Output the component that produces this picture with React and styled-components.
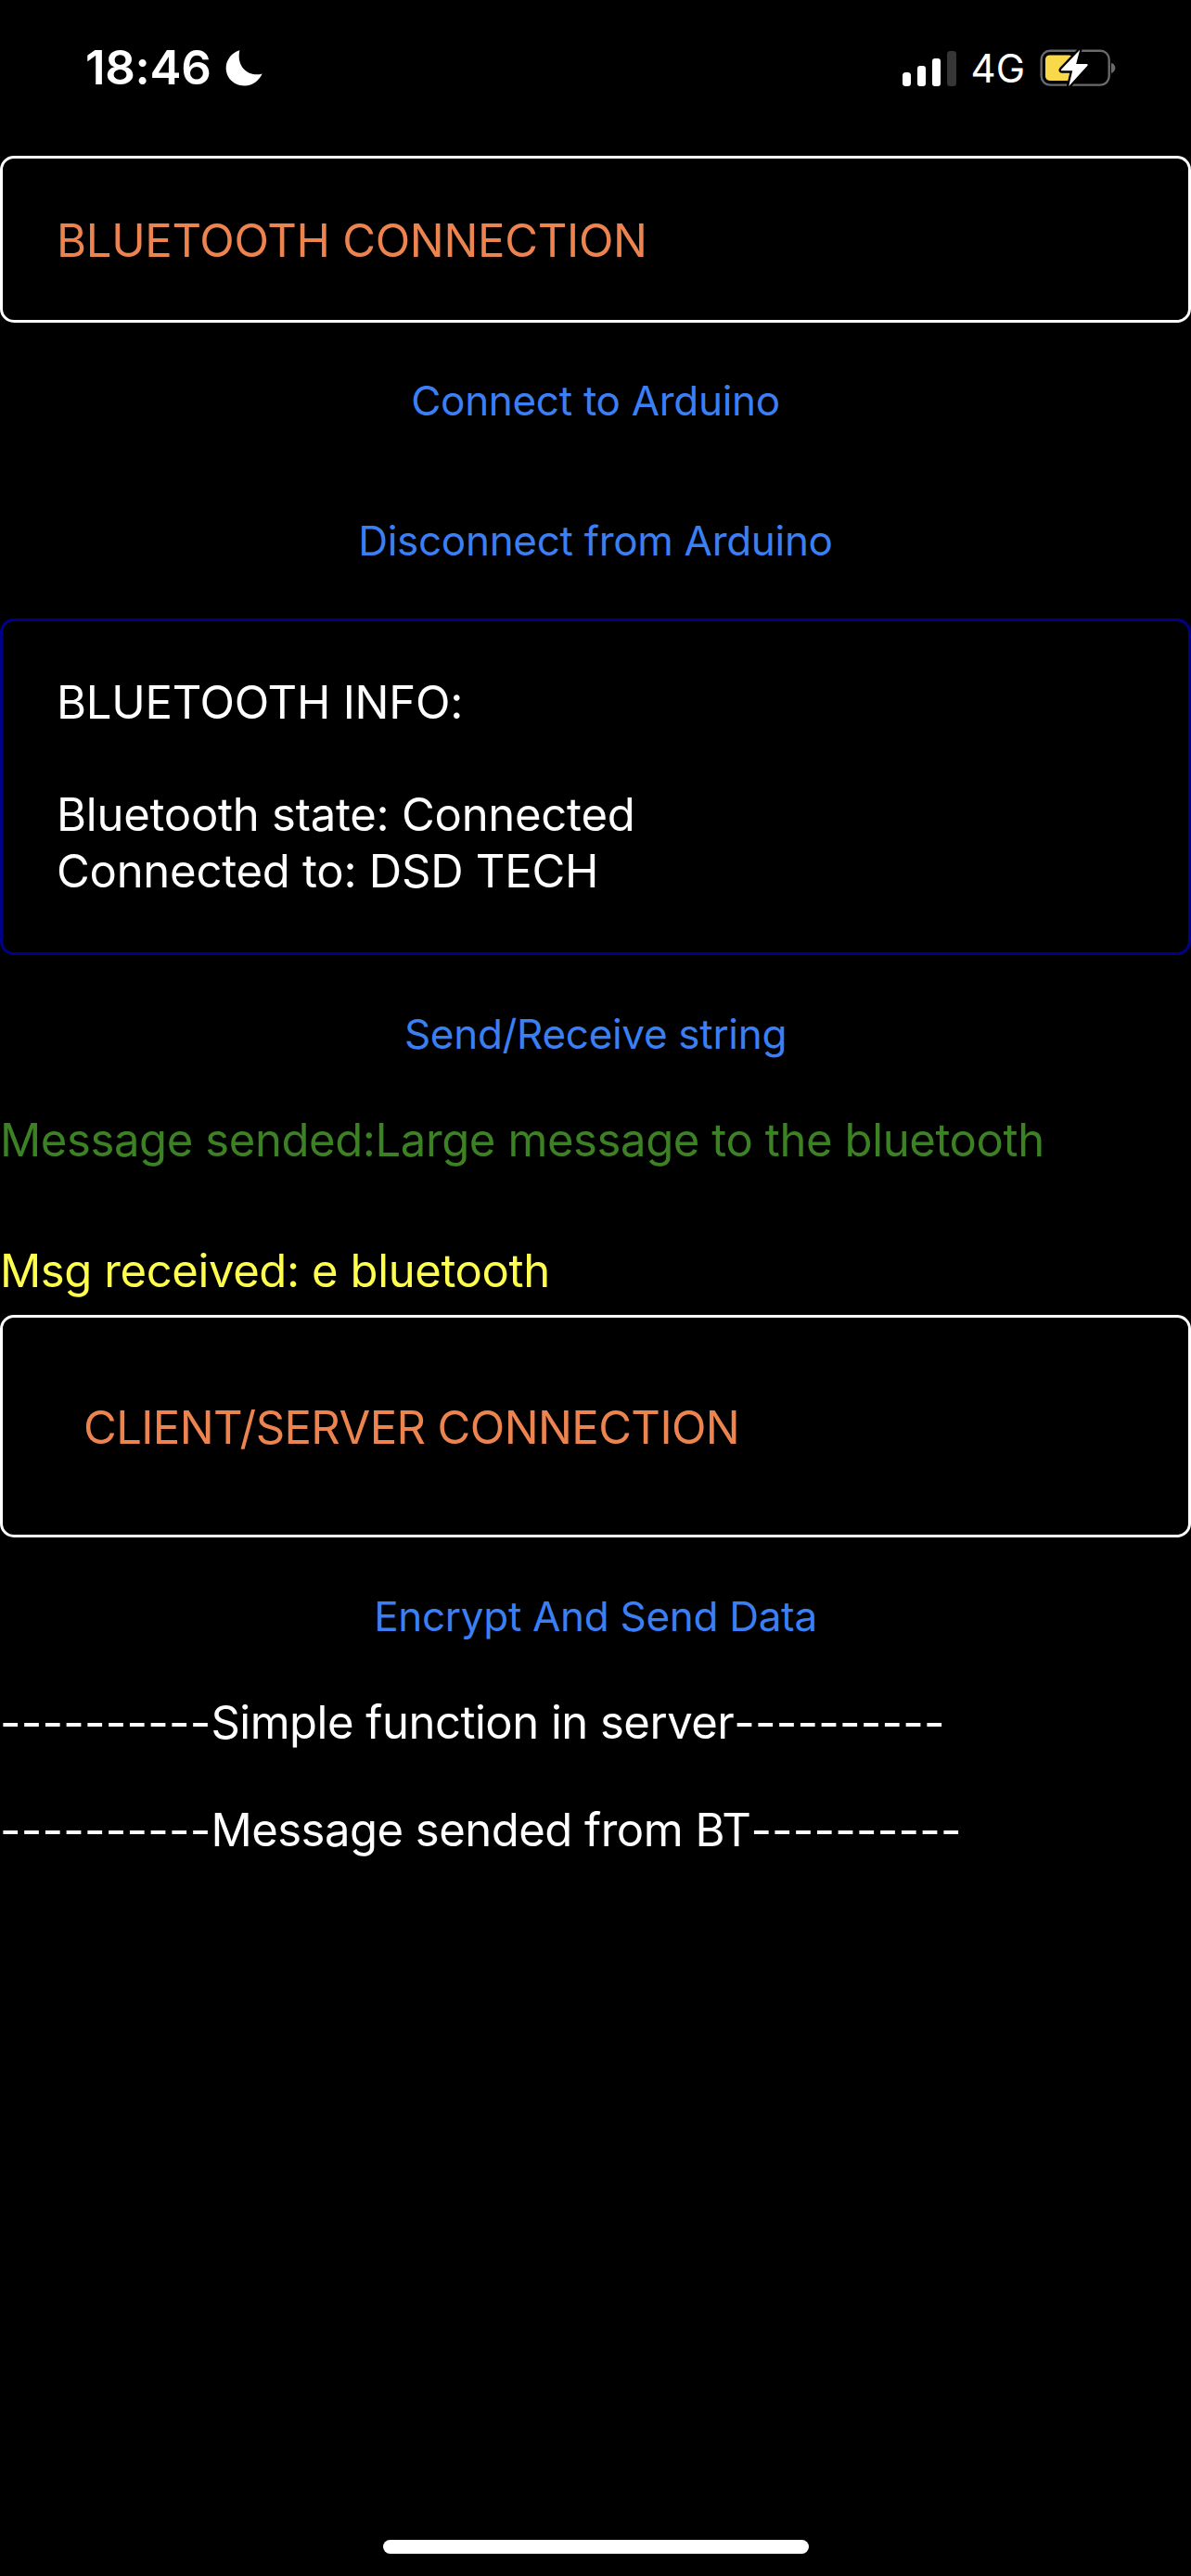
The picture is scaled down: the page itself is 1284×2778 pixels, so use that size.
import React from 'react';
import styled, { createGlobalStyle } from 'styled-components';

const GlobalStyle = createGlobalStyle`
  html, body {
    margin: 0;
    background: #000;
  }
  body {
    font-family: Inter, "Noto Sans", sans-serif;
  }
`;

export default function App() {
  return (
    <>
      <GlobalStyle />
      <Screen>
        <StatusBar>
          <Clock>
            <Time>18:46</Time>
            <MoonIcon />
          </Clock>
          <Indicators>
            <SignalIcon />
            <Network>4G</Network>
            <BatteryIcon />
          </Indicators>
        </StatusBar>

        <Card $height={180}>
          <SectionTitle>BLUETOOTH CONNECTION</SectionTitle>
        </Card>
        <ActionLink $top={54}>Connect to Arduino</ActionLink>
        <ActionLink $top={91}>Disconnect from Arduino</ActionLink>

        <InfoCard>
          <InfoText>BLUETOOTH INFO:</InfoText>
          <InfoText>&nbsp;</InfoText>
          <InfoText>Bluetooth state: Connected</InfoText>
          <InfoText>Connected to: DSD TECH</InfoText>
        </InfoCard>

        <ActionLink $top={55}>Send/Receive string</ActionLink>
        <Message $color="#3c8224" $top={55}>Message sended:Large message to the bluetooth</Message>
        <Message $color="#ffff4d" $top={81}>Msg received: e bluetooth</Message>

        <Card $height={240} $top={17}>
          <SectionTitle $indent>CLIENT/SERVER CONNECTION</SectionTitle>
        </Card>
        <ActionLink $top={55}>Encrypt And Send Data</ActionLink>
        <Message $top={55}>
          <Dashes>----------</Dashes>Simple function in server<Dashes>----------</Dashes>
        </Message>
        <Message $top={56}>
          <Dashes>----------</Dashes>Message sended from BT<Dashes>----------</Dashes>
        </Message>

        <HomeIndicator />
      </Screen>
    </>
  );
}

function MoonIcon() {
  return (
    <MoonSvg viewBox="540 66 132 128">
      <path
        d="M592 72C565 80 548 105 548 130C548 163 575 187 608 187C635 187 655 170 665 148C625 160 580 130 592 72Z"
        fill="#fff"
      />
    </MoonSvg>
  );
}

function SignalIcon() {
  return (
    <SignalSvg viewBox="0 0 58 38">
      <rect x="0" y="23" width="9" height="15" rx="3.5" fill="#fff" />
      <rect x="16" y="16" width="9" height="22" rx="3" fill="#fff" />
      <rect x="32" y="8" width="9" height="30" rx="3" fill="#fff" />
      <rect x="48" y="0" width="10" height="38" rx="3.5" fill="#363636" />
    </SignalSvg>
  );
}

function BatteryIcon() {
  return (
    <BatterySvg viewBox="720 60 250 135">
      <rect x="725" y="71" width="220" height="111" rx="28" fill="none" stroke="#6a6a6a" strokeWidth="7" />
      <path d="M952 110C961 113 965 120 965 127C965 134 961 141 952 144Z" fill="#6a6a6a" />
      <rect x="738" y="85" width="90" height="83" rx="14" fill="#f9d84a" />
      <path
        d="M850 68L790 131Q786 136 792 136H826L814 186L875 119Q878 114 872 114H838Z"
        fill="#fff"
        stroke="#000"
        strokeWidth="14"
        strokeLinejoin="round"
        paintOrder="stroke"
      />
    </BatterySvg>
  );
}

const Screen = styled.main`
  position: relative;
  display: flex;
  flex-direction: column;
  align-items: flex-start;
  width: 1284px;
  height: 2778px;
  overflow: hidden;
  background: #000;
`;

const StatusBar = styled.header`
  display: flex;
  justify-content: space-between;
  align-items: flex-start;
  width: 100%;
  height: 168px;
  box-sizing: border-box;
  padding: 53px 80px 0 92px;
  color: #fff;
`;

const Clock = styled.div`
  display: flex;
  align-items: center;
  gap: 13px;
  height: 40px;
`;

const Time = styled.span`
  font-size: 51px;
  font-weight: 600;
  line-height: 40px;
  letter-spacing: -0.3px;
`;

const MoonSvg = styled.svg`
  width: 44px;
  height: 43px;
`;

const Indicators = styled.div`
  display: flex;
  align-items: center;
  height: 40px;
`;

const SignalSvg = styled.svg`
  width: 58px;
  height: 38px;
  margin-top: 2px;
`;

const Network = styled.span`
  margin: 2px 16px 0 16px;
  font-size: 42px;
  font-weight: 400;
  line-height: 40px;
`;

const BatterySvg = styled.svg`
  width: 83px;
  height: 45px;
`;

const Card = styled.section`
  display: flex;
  align-items: center;
  width: 100%;
  height: ${(props) => props.$height}px;
  margin-top: ${(props) => props.$top || 0}px;
  box-sizing: border-box;
  border: 3px solid #fff;
  border-radius: 15px;
  padding: 3px 0 0 58px;
`;

const SectionTitle = styled.h2`
  margin: 0;
  padding-left: ${(props) => (props.$indent ? 29 : 0)}px;
  color: #ed8450;
  font-size: 49px;
  font-weight: 400;
  line-height: 60px;
  letter-spacing: ${(props) => (props.$indent ? -0.6 : -0.3)}px;
`;

const ActionLink = styled.button`
  align-self: center;
  margin-top: ${(props) => props.$top}px;
  border: 0;
  padding: 0;
  background: none;
  color: #3b7ff5;
  font-family: inherit;
  font-size: 44px;
  line-height: 60px;
  letter-spacing: -0.3px;
`;

const InfoCard = styled.section`
  width: 100%;
  height: 363px;
  margin-top: 54px;
  box-sizing: border-box;
  border: 3px solid #00008b;
  border-radius: 15px;
  padding: 58px 58px 0;
`;

const InfoText = styled.p`
  margin: 0;
  color: #fff;
  font-size: 49px;
  line-height: 60.5px;
  letter-spacing: -0.25px;
`;

const Message = styled.p`
  margin: ${(props) => props.$top}px 0 0;
  color: ${(props) => props.$color || '#fff'};
  font-size: 49px;
  line-height: 60px;
  letter-spacing: ${(props) => (props.$color ? -0.4 : -0.5)}px;
  white-space: nowrap;
`;

const Dashes = styled.span`
  letter-spacing: 0.2px;
`;

const HomeIndicator = styled.div`
  position: absolute;
  left: 413px;
  top: 2739px;
  width: 459px;
  height: 15px;
  border-radius: 8px;
  background: #fff;
`;
